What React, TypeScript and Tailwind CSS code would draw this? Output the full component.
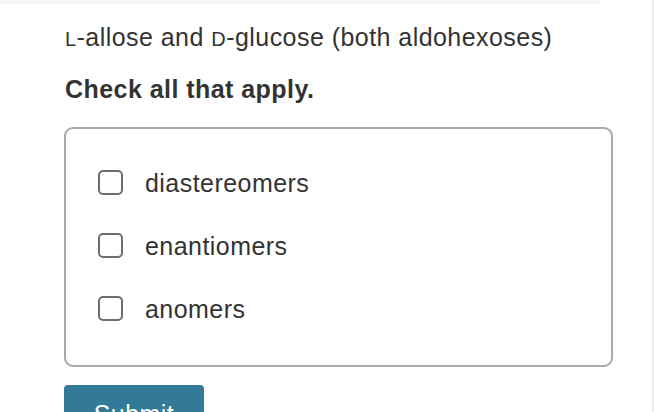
const options = ["diastereomers", "enantiomers", "anomers"];

function Checkbox() {
  return (
    <span className="inline-block w-[25px] h-[25px] rounded-[5px] border-2 border-[#6e6e6e] bg-white shrink-0" />
  );
}

export default function App() {
  return (
    <div
      className="w-[654px] h-[412px] overflow-hidden bg-white flex text-[#333333] tracking-[0.45px]"
      style={{ fontFamily: '"Liberation Sans", Arial, sans-serif' }}
    >
      <div className="w-[652px] flex flex-col">
        <div className="w-[600px] h-[4px] bg-[#f6f6f6] shrink-0" />
        <div className="pl-[65px] pt-[18px] shrink-0">
          <p className="text-[25px] leading-[30px]">
            <span className="text-[20px]">L</span>-allose and{" "}
            <span className="text-[20px]">D</span>-glucose (both aldohexoses)
          </p>
          <p className="mt-[20px] text-[25px] leading-[30px] font-bold">
            Check all that apply.
          </p>
        </div>
        <div className="ml-[64px] mt-[23px] w-[549px] h-[240px] shrink-0 rounded-[9px] border-2 border-[#a9a9a9] flex flex-col pt-[41px] pl-[32px] gap-[38px]">
          {options.map((o) => (
            <label key={o} className="flex items-center gap-[22px] h-[25px]">
              <Checkbox />
              <span className="text-[25px] leading-[30px]">{o}</span>
            </label>
          ))}
        </div>
        <div className="ml-[64px] mt-[18px] shrink-0">
          <button className="w-[140px] h-[56px] rounded-[4px] bg-[#337a98] text-white text-[25px] leading-[30px] pb-[12px] pt-[14px] flex justify-center">
            Submit
          </button>
        </div>
      </div>
      <div className="w-[2px] bg-[#ebebeb]" />
    </div>
  );
}
